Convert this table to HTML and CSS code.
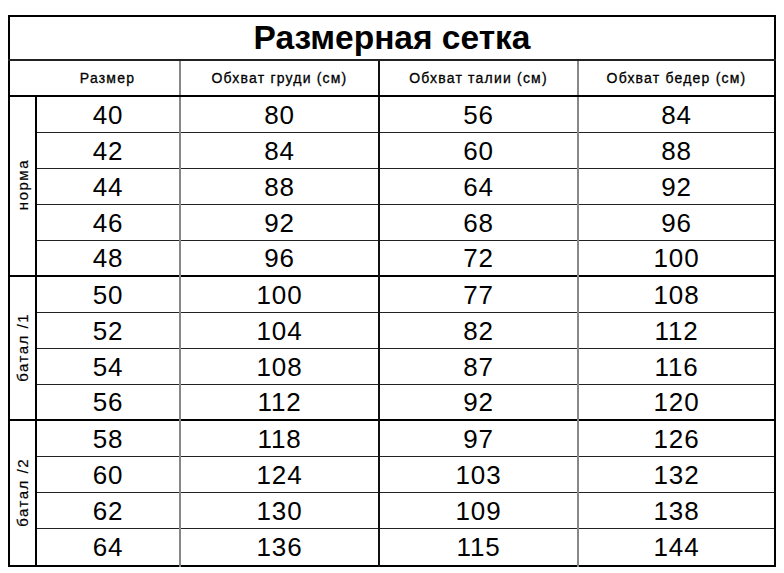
FILE: index.html
```html
<!DOCTYPE html>
<html lang="ru">
<head>
<meta charset="utf-8">
<title>Размерная сетка</title>
<link rel="stylesheet" href="styles.css">
</head>
<body>
<table class="grid">
  <colgroup>
    <col class="c-group">
    <col class="c-size">
    <col class="c-chest">
    <col class="c-waist">
    <col class="c-hips">
  </colgroup>
  <thead>
    <tr class="title-row"><th colspan="5" class="title">Размерная сетка</th></tr>
    <tr class="head-row">
      <th class="h-empty"></th>
      <th class="h-size">Размер</th>
      <th class="gray-l">Обхват груди (см)</th>
      <th class="dark-l">Обхват талии (см)</th>
      <th class="gray-l">Обхват бедер (см)</th>
    </tr>
  </thead>
  <tbody class="grp">
    <tr><th rowspan="5" class="label"><span>норма</span></th><td>40</td><td class="gray-l">80</td><td class="dark-l">56</td><td class="gray-l">84</td></tr>
    <tr><td>42</td><td class="gray-l">84</td><td class="dark-l">60</td><td class="gray-l">88</td></tr>
    <tr><td>44</td><td class="gray-l">88</td><td class="dark-l">64</td><td class="gray-l">92</td></tr>
    <tr><td>46</td><td class="gray-l">92</td><td class="dark-l">68</td><td class="gray-l">96</td></tr>
    <tr><td>48</td><td class="gray-l">96</td><td class="dark-l">72</td><td class="gray-l">100</td></tr>
  </tbody>
  <tbody class="grp">
    <tr><th rowspan="4" class="label"><span>батал /1</span></th><td>50</td><td class="gray-l">100</td><td class="dark-l">77</td><td class="gray-l">108</td></tr>
    <tr><td>52</td><td class="gray-l">104</td><td class="dark-l">82</td><td class="gray-l">112</td></tr>
    <tr><td>54</td><td class="gray-l">108</td><td class="dark-l">87</td><td class="gray-l">116</td></tr>
    <tr><td>56</td><td class="gray-l">112</td><td class="dark-l">92</td><td class="gray-l">120</td></tr>
  </tbody>
  <tbody class="grp grp-last">
    <tr><th rowspan="4" class="label"><span>батал /2</span></th><td>58</td><td class="gray-l">118</td><td class="dark-l">97</td><td class="gray-l">126</td></tr>
    <tr><td>60</td><td class="gray-l">124</td><td class="dark-l">103</td><td class="gray-l">132</td></tr>
    <tr><td>62</td><td class="gray-l">130</td><td class="dark-l">109</td><td class="gray-l">138</td></tr>
    <tr><td>64</td><td class="gray-l">136</td><td class="dark-l">115</td><td class="gray-l">144</td></tr>
  </tbody>
</table>
</body>
</html>
```

FILE: styles.css
```css
html, body {
  margin: 0;
  padding: 0;
  background: #ffffff;
}
body {
  padding: 15px 8px 0 8px;
  font-family: "Liberation Sans", Arial, sans-serif;
  color: #000;
}
.grid {
  width: 768px;
  border-collapse: collapse;
  table-layout: fixed;
  border: 2px solid #000;
}
.c-group { width: 27px; }
.c-size { width: 144px; }
.c-chest { width: 199px; }
.c-waist { width: 199px; }
.c-hips { width: 197px; }

.grid th, .grid td {
  padding: 0;
  text-align: center;
  vertical-align: middle;
}
.title {
  height: 42px;
  font-size: 33.5px;
  font-weight: bold;
  border-bottom: 2px solid #222;
  line-height: 1;
  padding-top: 1px;
}
.head-row th {
  height: 34px;
  font-size: 14px;
  font-weight: normal;
  letter-spacing: 1.2px;
  line-height: 1;
  -webkit-text-stroke: 0.3px #000;
  border-bottom: 2px solid #000;
}
.grp {
  border-bottom: 2px solid #000;
}
.grp td {
  height: 35px;
  font-size: 26px;
  letter-spacing: 0.8px;
  line-height: 1;
  border-top: 1px solid #222;
}
.grp tr:first-child td {
  border-top: 0;
}
.grp tr:last-child td {
  height: 34px;
}
.grp-last tr:last-child td {
  height: 36px;
}
.label {
  border-right: 2px solid #000;
  font-weight: normal;
  font-size: 15px;
  letter-spacing: 1.5px;
  line-height: 1;
  -webkit-text-stroke: 0.2px #000;
}
.label span {
  display: inline-block;
  writing-mode: vertical-rl;
  transform: rotate(180deg);
}
.gray-l {
  border-left: 2px solid #888;
}
.dark-l {
  border-left: 2px solid #111;
}
```
